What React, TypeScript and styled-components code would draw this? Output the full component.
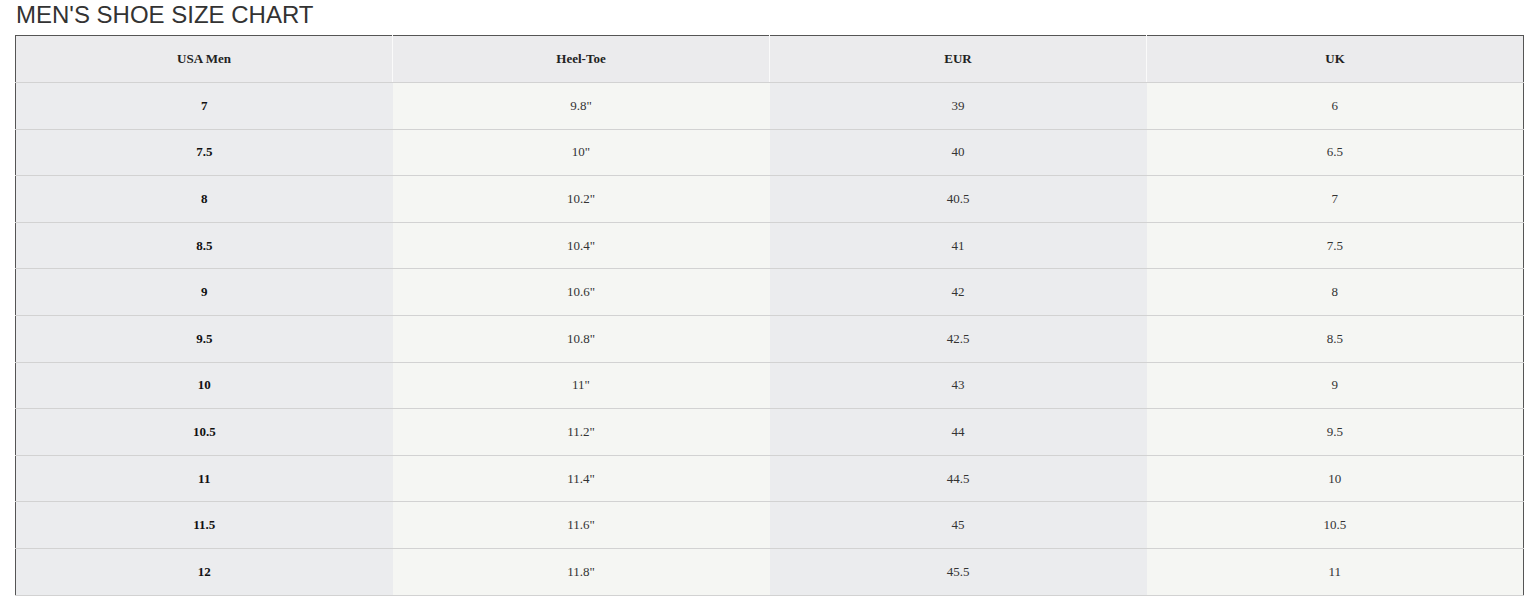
import React from "react";
import styled, { createGlobalStyle } from "styled-components";

const GlobalStyle = createGlobalStyle`
  html, body {
    margin: 0;
    padding: 0;
    background: #fff;
  }
`;

const Page = styled.div`
  padding: 0 12px 0 15px;
`;

const Title = styled.h2`
  margin: 0;
  padding: 2px 0 0 1px;
  height: 33px;
  font-family: "Liberation Sans", Arial, sans-serif;
  font-weight: 400;
  font-size: 24px;
  line-height: 26px;
  color: #333;
`;

const Table = styled.table`
  width: 100%;
  border-collapse: collapse;
  table-layout: fixed;
  border: 1px solid #555;
  border-bottom: none;
  font-family: "Liberation Serif", "Times New Roman", serif;
  font-size: 13px;
  color: #222;
`;

const HeadCell = styled.th`
  height: 46px;
  padding: 0;
  background: #ebebed;
  border-left: 1px solid #fafafa;
  border-bottom: 1px solid #d2d2d2;
  font-weight: 700;
  text-align: center;
  &:first-child {
    border-left: none;
  }
`;

const Cell = styled.td<{ $shade: boolean; $bold?: boolean }>`
  height: 45.6px;
  padding: 0;
  text-align: center;
  background: ${(p) => (p.$shade ? "#ebecee" : "#f5f6f3")};
  border-bottom: 1px solid #d2d2d2;
  font-weight: ${(p) => (p.$bold ? 700 : 400)};
  color: ${(p) => (p.$bold ? "#111" : "#333")};
`;

const headers = ["USA Men", "Heel-Toe", "EUR", "UK"];

const rows: string[][] = [
  ["7", '9.8"', "39", "6"],
  ["7.5", '10"', "40", "6.5"],
  ["8", '10.2"', "40.5", "7"],
  ["8.5", '10.4"', "41", "7.5"],
  ["9", '10.6"', "42", "8"],
  ["9.5", '10.8"', "42.5", "8.5"],
  ["10", '11"', "43", "9"],
  ["10.5", '11.2"', "44", "9.5"],
  ["11", '11.4"', "44.5", "10"],
  ["11.5", '11.6"', "45", "10.5"],
  ["12", '11.8"', "45.5", "11"],
];

export default function App() {
  return (
    <>
      <GlobalStyle />
      <Page>
        <Title>MEN'S SHOE SIZE CHART</Title>
        <Table>
          <thead>
            <tr>
              {headers.map((h) => (
                <HeadCell key={h}>{h}</HeadCell>
              ))}
            </tr>
          </thead>
          <tbody>
            {rows.map((r) => (
              <tr key={r[0]}>
                {r.map((v, i) => (
                  <Cell key={i} $shade={i % 2 === 0} $bold={i === 0}>
                    {v}
                  </Cell>
                ))}
              </tr>
            ))}
          </tbody>
        </Table>
      </Page>
    </>
  );
}
